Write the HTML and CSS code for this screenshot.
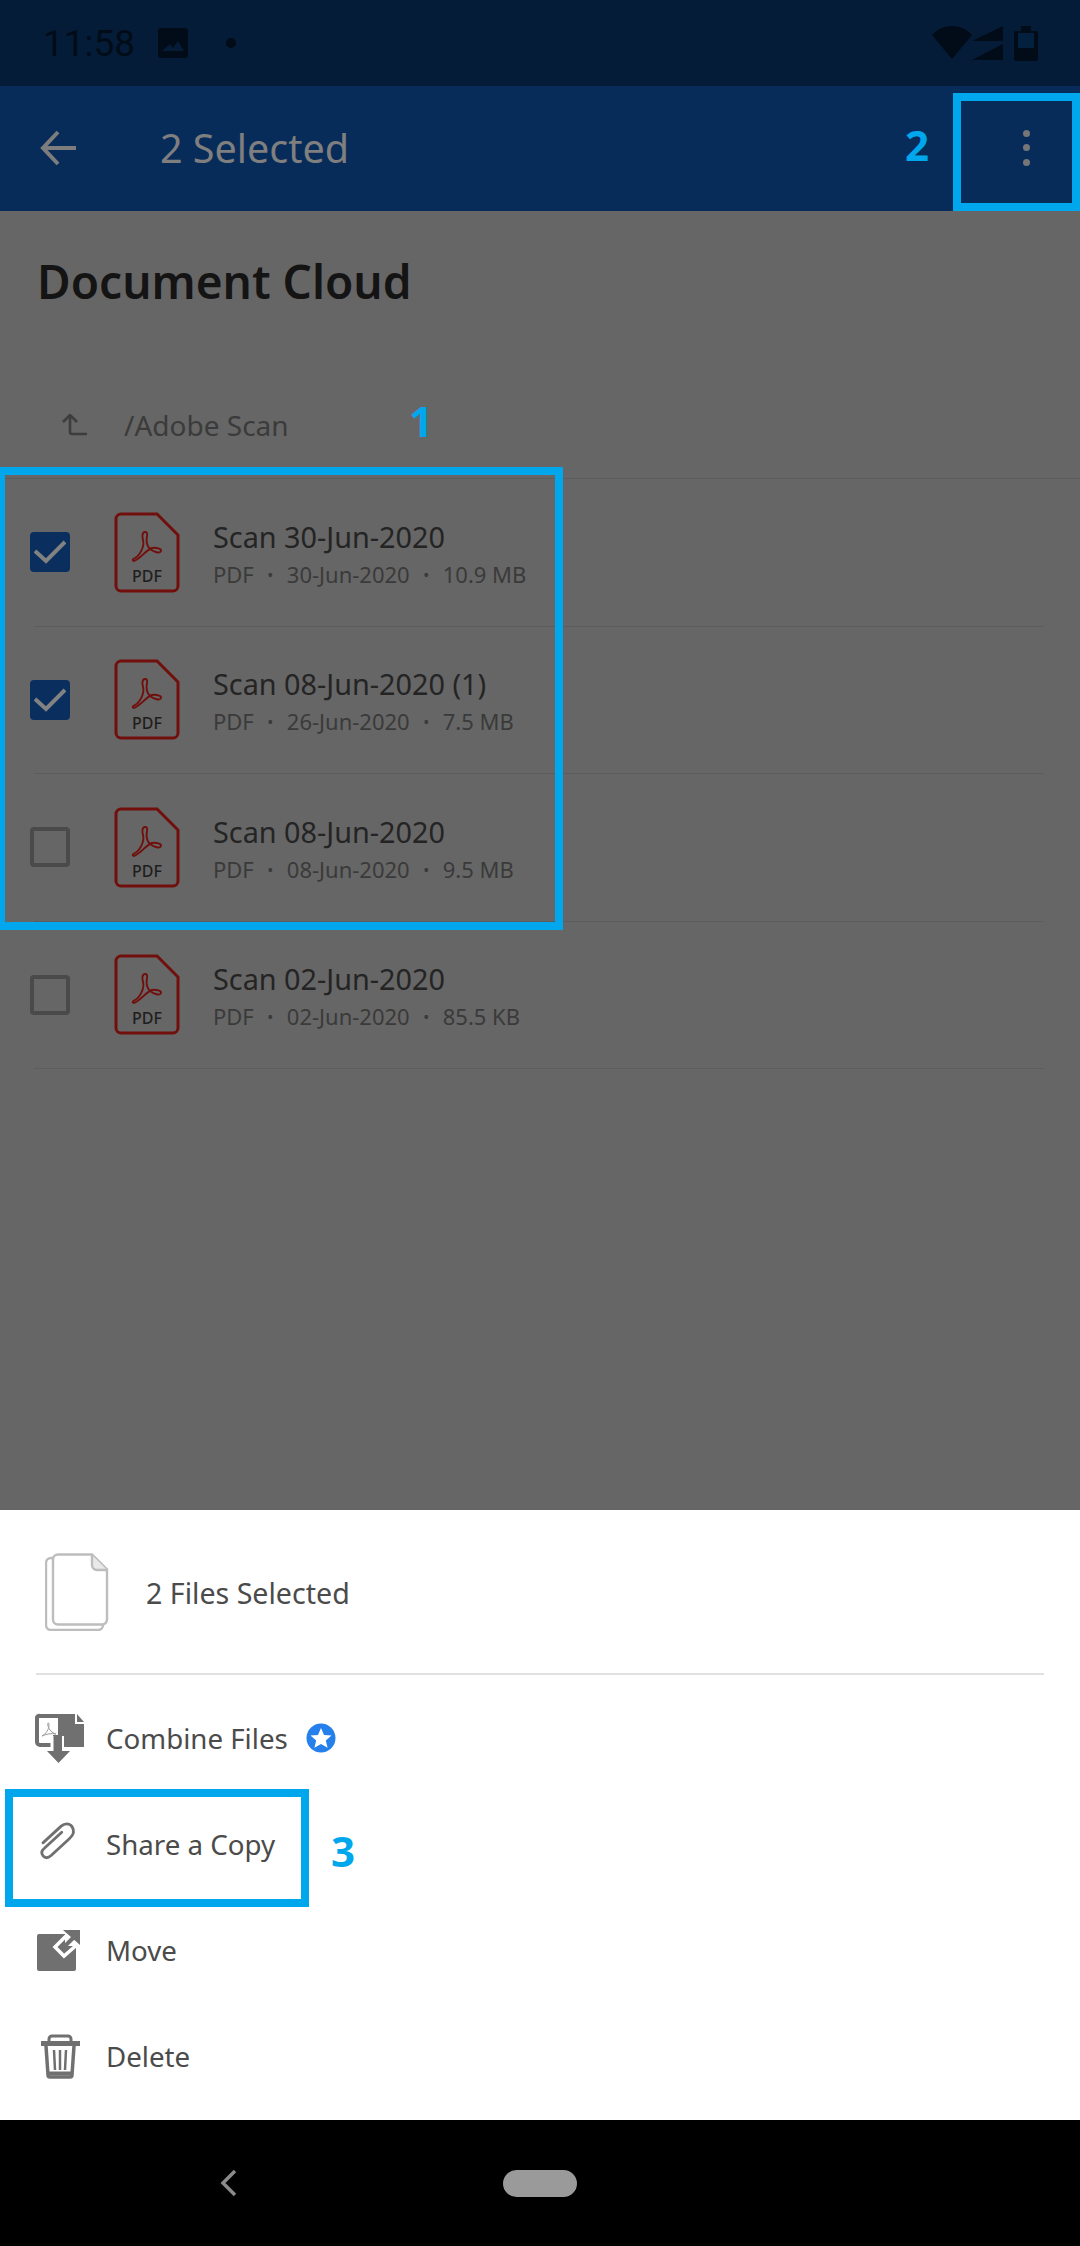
FILE: index.html
```html
<!DOCTYPE html>
<html lang="en">
<head>
<meta charset="utf-8">
<title>Document Cloud</title>
<link rel="stylesheet" href="styles.css">
</head>
<body>
<div class="screen">
  <header class="status">
    <div class="status-left">
      <span class="time">11:58</span>
      <svg class="st-img" width="30" height="30" viewBox="0 0 30 30"><path fill="#020c18" fill-rule="evenodd" d="M3 0h24a3 3 0 0 1 3 3v24a3 3 0 0 1-3 3H3a3 3 0 0 1-3-3V3a3 3 0 0 1 3-3zM4 23h22l-6-10-5 7-3-4z"/></svg>
      <span class="st-dot"></span>
    </div>
    <svg class="st-right" width="108" height="36" viewBox="0 0 108 36"><path fill="#020c18" d="M2 10C12 -2 32 -2 42 10L22 34z"/><path stroke="#0b1c30" stroke-width="1.6" d="M42 4l7 9M49 4l-7 9" fill="none"/><path fill="#020c18" d="M73 1v15H42zM73 19v16H42z"/><path fill="#020c18" d="M91 1h10v5h5a2 2 0 0 1 2 2v26a2 2 0 0 1-2 2H86a2 2 0 0 1-2-2V8a2 2 0 0 1 2-2h5z"/><rect x="88" y="8" width="16" height="15" fill="#04203f"/></svg>
  </header>

  <div class="appbar">
    <svg class="ab-back" width="38" height="36" viewBox="0 0 38 36"><path d="M18 2L3 18l15 16M3 18h33" fill="none" stroke="#7d7d7d" stroke-width="4"/></svg>
    <span class="ab-title">2 Selected</span>
    <span class="ab-dots"><i></i><i></i><i></i></span>
  </div>

  <main class="main">
    <h1 class="page-title">Document Cloud</h1>
    <div class="path">
      <svg width="26" height="22" viewBox="0 0 26 22"><path d="M1 8l7-7 7 7M8 2v16a2 2 0 0 0 2 2h15" fill="none" stroke="#3d3d3d" stroke-width="2.6"/></svg>
      <span>/Adobe Scan</span>
    </div>
    <ul class="files">
      <li class="file">
        <span class="check on"><svg width="32" height="24" viewBox="0 0 32 24"><path d="M1 11l11 10L31 2" fill="none" stroke="#828282" stroke-width="4"/></svg></span>
        <svg class="pdf" width="66" height="81" viewBox="0 0 66 81"><path d="M7 2h36l21 21v51a5 5 0 0 1-5 5H7a5 5 0 0 1-5-5V7a5 5 0 0 1 5-5z" fill="none" stroke="#700f0c" stroke-width="3"/><path d="M31 20c-3 0-3 5-2 8 2 7-4 16-8 18-4 2-2 4 1 2 6-3 10-10 16-12 4-1 10 1 9 3-1 3-7 1-11-2-3-3-4-8-3-13 .5-3 0-4-2-4z" fill="none" stroke="#700f0c" stroke-width="1.9"/><text x="33" y="70" class="pdf-label" text-anchor="middle">PDF</text></svg>
        <div class="file-text"><div class="file-name">Scan 30-Jun-2020</div><div class="file-meta">PDF<b>•</b>30-Jun-2020<b>•</b>10.9 MB</div></div>
      </li>
      <li class="file">
        <span class="check on"><svg width="32" height="24" viewBox="0 0 32 24"><path d="M1 11l11 10L31 2" fill="none" stroke="#828282" stroke-width="4"/></svg></span>
        <svg class="pdf" width="66" height="81" viewBox="0 0 66 81"><path d="M7 2h36l21 21v51a5 5 0 0 1-5 5H7a5 5 0 0 1-5-5V7a5 5 0 0 1 5-5z" fill="none" stroke="#700f0c" stroke-width="3"/><path d="M31 20c-3 0-3 5-2 8 2 7-4 16-8 18-4 2-2 4 1 2 6-3 10-10 16-12 4-1 10 1 9 3-1 3-7 1-11-2-3-3-4-8-3-13 .5-3 0-4-2-4z" fill="none" stroke="#700f0c" stroke-width="1.9"/><text x="33" y="70" class="pdf-label" text-anchor="middle">PDF</text></svg>
        <div class="file-text"><div class="file-name">Scan 08-Jun-2020 (1)</div><div class="file-meta">PDF<b>•</b>26-Jun-2020<b>•</b>7.5 MB</div></div>
      </li>
      <li class="file">
        <span class="check"></span>
        <svg class="pdf" width="66" height="81" viewBox="0 0 66 81"><path d="M7 2h36l21 21v51a5 5 0 0 1-5 5H7a5 5 0 0 1-5-5V7a5 5 0 0 1 5-5z" fill="none" stroke="#700f0c" stroke-width="3"/><path d="M31 20c-3 0-3 5-2 8 2 7-4 16-8 18-4 2-2 4 1 2 6-3 10-10 16-12 4-1 10 1 9 3-1 3-7 1-11-2-3-3-4-8-3-13 .5-3 0-4-2-4z" fill="none" stroke="#700f0c" stroke-width="1.9"/><text x="33" y="70" class="pdf-label" text-anchor="middle">PDF</text></svg>
        <div class="file-text"><div class="file-name">Scan 08-Jun-2020</div><div class="file-meta">PDF<b>•</b>08-Jun-2020<b>•</b>9.5 MB</div></div>
      </li>
      <li class="file">
        <span class="check"></span>
        <svg class="pdf" width="66" height="81" viewBox="0 0 66 81"><path d="M7 2h36l21 21v51a5 5 0 0 1-5 5H7a5 5 0 0 1-5-5V7a5 5 0 0 1 5-5z" fill="none" stroke="#700f0c" stroke-width="3"/><path d="M31 20c-3 0-3 5-2 8 2 7-4 16-8 18-4 2-2 4 1 2 6-3 10-10 16-12 4-1 10 1 9 3-1 3-7 1-11-2-3-3-4-8-3-13 .5-3 0-4-2-4z" fill="none" stroke="#700f0c" stroke-width="1.9"/><text x="33" y="70" class="pdf-label" text-anchor="middle">PDF</text></svg>
        <div class="file-text"><div class="file-name">Scan 02-Jun-2020</div><div class="file-meta">PDF<b>•</b>02-Jun-2020<b>•</b>85.5 KB</div></div>
      </li>
    </ul>
  </main>

  <section class="sheet">
    <div class="sheet-head">
      <svg width="64" height="78" viewBox="0 0 64 78"><path d="M8 5H6a5 5 0 0 0-5 5v62a5 5 0 0 0 5 5h47a5 5 0 0 0 5-5v-2" fill="#fff" stroke="#bdbdbd" stroke-width="2.4"/><path d="M13 1.500h34l15 15v50a5 5 0 0 1-5 5H13a5 5 0 0 1-5-5v-60a5 5 0 0 1 5-5z" fill="#fff" stroke="#bdbdbd" stroke-width="2.4"/><path d="M47 2v10a5 5 0 0 0 5 5h10" fill="#e9e9e9" stroke="#bdbdbd" stroke-width="2.4"/></svg>
      <span class="sheet-count">2 Files Selected</span>
    </div>
    <ul class="actions">
      <li class="action">
        <svg width="50" height="50" viewBox="0 0 50 50"><path d="M5 3h20v29H5a3 3 0 0 1-3-3V5a2 2 0 0 1 3-2z" fill="#fff" stroke="#707070" stroke-width="4"/><path d="M27 1h13v10h9v23H27z" fill="#707070"/><path d="M42 1l7 8h-7z" fill="#707070"/><path d="M7 23c4-2 7-7 7-11 0-3-2-3-1 1 1 4 4 7 8 8-4-1-10 0-14 2z" fill="none" stroke="#9a9a9a" stroke-width="1"/><path d="M18 22h9v16h8L23.500 50 12 38h6z" fill="#707070"/><path d="M17 23v15" stroke="#fff" stroke-width="3"/><path d="M28 23v11" stroke="#fff" stroke-width="2"/></svg>
        <span>Combine Files</span>
        <svg class="star" width="30" height="30" viewBox="0 0 30 30"><circle cx="15" cy="15" r="14.500" fill="#2680eb"/><path d="M15 5l3 7 7.500.6-5.700 4.900 1.800 7.300L15 21l-6.600 3.800 1.800-7.300-5.700-4.900L12 12z" fill="#fff"/></svg>
      </li>
      <li class="action">
        <svg width="50" height="50" viewBox="0 0 50 50"><path d="M27 14L11 31c-3 3-3 6-1 8s5 2 8-1L35 20c4-4 5-8 2-12s-8-3-11 0L9 26" fill="none" stroke="#707070" stroke-width="2.800" stroke-linecap="round" transform="translate(-1 -1) rotate(4 25 25)"/></svg>
        <span>Share a Copy</span>
      </li>
      <li class="action">
        <svg width="50" height="50" viewBox="0 0 50 50"><path d="M4 9h37v35a2 2 0 0 1-2 2H4a2 2 0 0 1-2-2V11a2 2 0 0 1 2-2z" fill="#707070"/><path d="M30 7h14v14H30z" fill="#fff"/><path d="M32 10L20 22l9 9 15-13" fill="none" stroke="#fff" stroke-width="3.500"/><path d="M28 5h17v15z" fill="#707070"/><path d="M40 11L27 24" stroke="#707070" stroke-width="4"/></svg>
        <span>Move</span>
      </li>
      <li class="action">
        <svg width="50" height="50" viewBox="0 0 50 50"><path d="M14 10V8a3 3 0 0 1 3-3h16a3 3 0 0 1 3 3v2" fill="none" stroke="#707070" stroke-width="3"/><path d="M6 10h39v5H6z" fill="#707070"/><path d="M11 15l2 29a2 2 0 0 0 2 2h20a2 2 0 0 0 2-2l2-29" fill="none" stroke="#707070" stroke-width="3.500"/><path d="M19 19l1 20M25 19v20M31 19l-1 20" stroke="#707070" stroke-width="2.500"/><path d="M13 42.500h24" stroke="#707070" stroke-width="4"/></svg>
        <span>Delete</span>
      </li>
    </ul>
  </section>

  <nav class="navbar">
    <svg class="nav-back" width="18" height="28" viewBox="0 0 18 28"><path d="M15 2L3 14l12 12" fill="none" stroke="#8a8a8a" stroke-width="3.500"/></svg>
    <span class="nav-pill"></span>
  </nav>

  <div class="mark mark-files"></div>
  <div class="mark mark-menu"></div>
  <div class="mark mark-share"></div>
  <span class="num num-1">1</span>
  <span class="num num-2">2</span>
  <span class="num num-3">3</span>
</div>
</body>
</html>
```

FILE: styles.css
```css
* { box-sizing: border-box; }
html, body { margin: 0; padding: 0; }
body { font-family: "Noto Sans", "Open Sans", sans-serif; background: #666; }
ul { list-style: none; margin: 0; padding: 0; }
.screen { position: relative; width: 1080px; height: 2246px; display: flex; flex-direction: column; overflow: hidden; }

.status { height: 86px; flex: none; background: #041c37; display: flex; align-items: center; justify-content: space-between; padding: 0 42px 0 43px; }
.status-left { display: flex; align-items: center; }
.time { font-family: "Roboto", sans-serif; font-size: 37px; color: #020c18; width: 115px; line-height: 1; }
.st-img { display: block; }
.st-dot { width: 10px; height: 10px; background: #020c18; border-radius: 50%; margin-left: 38px; }
.st-right { display: block; }

.appbar { height: 125px; flex: none; background: #082c5a; display: flex; align-items: center; padding: 0 0 0 40px; position: relative; }
.ab-back { display: block; margin-top: -2px; }
.ab-title { font-size: 39.500px; color: #807f7f; margin-left: 82px; margin-top: -1px; }
.ab-dots { display: flex; flex-direction: column; gap: 7.500px; margin-left: auto; margin-right: 50px; margin-top: -2px; }
.ab-dots i { width: 7px; height: 7px; border-radius: 50%; background: #767676; display: block; }

.main { flex: 1; background: #666; display: flex; flex-direction: column; }
.page-title { margin: 0; padding: 40px 0 0 37px; height: 120px; font-size: 46px; font-weight: 600; color: #141414; line-height: 60px; }
.path { height: 148px; border-bottom: 1px solid #5d5d5d; display: flex; align-items: center; padding: 40px 0 0 62px; gap: 36px; color: #3b3b3b; font-size: 28px; }
.files { display: flex; flex-direction: column; }
.file { height: 147.500px; margin: 0 36px 0 34px; border-bottom: 1px solid #5d5d5d; display: flex; align-items: center; }
.check { width: 40px; height: 40px; border: 4px solid #4a4a4a; border-radius: 4px; display: flex; align-items: center; justify-content: center; margin-left: -4px; flex: none; }
.check svg { flex: none; }
.check.on { background: #0a2f5f; border-color: #0a2f5f; }
.pdf { display: block; margin-left: 44px; flex: none; }
.pdf-label { font-family: "Noto Sans", sans-serif; font-size: 16px; font-weight: 500; fill: #1e1e1e; }
.file-text { margin-left: 33px; padding-top: 8px; }
.file-name { font-size: 28.800px; line-height: 36px; color: #242424; }
.file-meta { font-size: 22px; line-height: 38px; color: #3a3a3a; }
.file-meta b { font-weight: 400; margin: 0 13.500px; font-size: 16px; vertical-align: 2px; }

.sheet { height: 610px; flex: none; background: #fff; color: #4b4b4b; font-size: 27.700px; }
.sheet-head { height: 165px; margin: 0 36px; border-bottom: 2px solid #e1e1e1; display: flex; align-items: center; padding-left: 9px; gap: 37px; font-size: 28.600px; }
.sheet-head svg { display: block; flex: none; }
.sheet-count { padding-top: 2px; }
.actions { padding-top: 10px; }
.action { height: 106px; display: flex; align-items: center; padding-left: 35px; gap: 21px; }
.action svg { display: block; flex: none; }
.action .star { margin-left: -3px; }

.navbar { height: 126px; flex: none; background: #000; position: relative; display: flex; align-items: center; justify-content: center; }
.nav-pill { width: 74px; height: 27px; border-radius: 14px; background: #9a9a9a; }
.nav-back { position: absolute; left: 220px; top: 49px; }

.mark { position: absolute; border: 8px solid #00a7ec; }
.mark-files { left: -3px; top: 467px; width: 566px; height: 463px; }
.mark-menu { left: 953px; top: 93px; width: 127px; height: 118px; }
.mark-share { left: 5px; top: 1789px; width: 304px; height: 118px; }
.num { position: absolute; font-family: "Open Sans", sans-serif; font-weight: 700; font-size: 42px; line-height: 1; color: #00a7ec; }
.num-1 { left: 409px; top: 400px; }
.num-2 { left: 905px; top: 124px; }
.num-3 { left: 331px; top: 1830px; }
```
